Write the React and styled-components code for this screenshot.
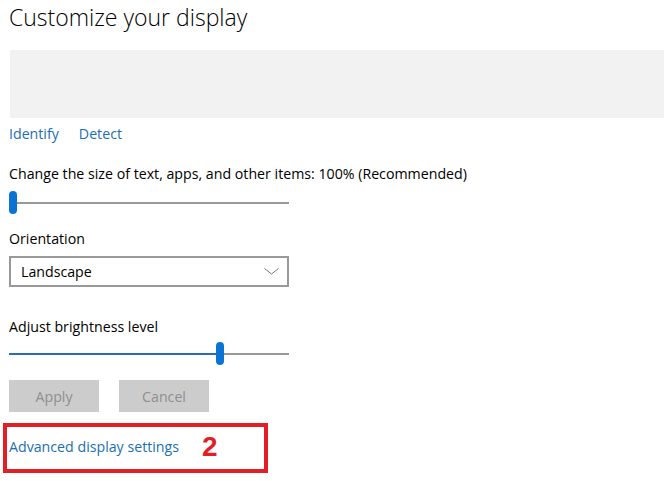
import React from "react";
import styled, { createGlobalStyle } from "styled-components";

const Global = createGlobalStyle`
  html, body { margin: 0; padding: 0; background: #fff; }
  body { font-family: "Open Sans", "Noto Sans", sans-serif; color: #000; }
`;

const Page = styled.div`
  width: 665px;
  height: 481px;
  overflow: hidden;
  box-sizing: border-box;
  padding: 0 1px 0 9px;
  display: flex;
  flex-direction: column;
`;

const Title = styled.h1`
  margin: 1px 0 0 0;
  font-weight: 300;
  font-size: 23px;
  line-height: 32px;
  color: #000;
`;

const Preview = styled.div`
  margin: 17px 0 0 1px;
  height: 68px;
  background: #f2f2f2;
`;

const LinkRow = styled.div`
  display: flex;
  gap: 20px;
  margin-top: 6px;
`;

const Link = styled.a`
  font-size: 14.2px;
  line-height: 20px;
  color: #1a6fb5;
  text-decoration: none;
  cursor: pointer;
`;

const Label = styled.div`
  font-size: 14.2px;
  line-height: 20px;
  margin-top: ${(p) => p.$top}px;
  color: #000;
`;

const SliderWrap = styled.div`
  position: relative;
  width: 280px;
  height: 24px;
  margin-top: ${(p) => p.$top}px;
  display: flex;
  align-items: center;
`;

const Track = styled.div`
  height: 2px;
  width: 100%;
  background: linear-gradient(
    to right,
    #2a6db5 0,
    #2a6db5 ${(p) => p.$fill}%,
    #999 ${(p) => p.$fill}%,
    #999 100%
  );
`;

const Thumb = styled.div`
  position: absolute;
  top: 0;
  width: 8px;
  height: 23px;
  border-radius: 4px;
  background: #0a74d2;
`;

const Select = styled.div`
  box-sizing: border-box;
  width: 280px;
  height: 31px;
  margin-top: ${(p) => p.$top}px;
  border: 2px solid #999;
  display: flex;
  align-items: center;
  justify-content: space-between;
  padding: 0 8px 0 10px;
  font-size: 14.2px;
`;

const ButtonRow = styled.div`
  display: flex;
  gap: 20px;
  margin-top: 14px;
`;

const Button = styled.button`
  width: 90px;
  height: 32px;
  border: none;
  background: #cccccc;
  color: #8f8f8f;
  font-family: inherit;
  font-size: 14.2px;
  padding: 0;
`;

const Highlight = styled.div`
  box-sizing: border-box;
  width: 265px;
  height: 50px;
  margin: 11px 0 0 -6px;
  border: 4px solid #e31e27;
  display: flex;
  align-items: center;
  padding: 0 0 2px 2px;
`;

const Badge = styled.span`
  margin-left: 23px;
  font-family: "Liberation Sans", Arial, sans-serif;
  font-weight: 700;
  font-size: 28px;
  line-height: 30px;
  color: #e31e27;
`;

function Slider({ value, top }) {
  return (
    <SliderWrap $top={top}>
      <Track $fill={value} />
      <Thumb style={{ left: `calc((100% - 8px) * ${value / 100})` }} />
    </SliderWrap>
  );
}

export default function App() {
  return (
    <>
      <Global />
      <Page>
        <Title>Customize your display</Title>
        <Preview />
        <LinkRow>
          <Link>Identify</Link>
          <Link>Detect</Link>
        </LinkRow>
        <Label $top={20}>
          Change the size of text, apps, and other items: 100% (Recommended)
        </Label>
        <Slider value={0} top={7} />
        <Label $top={14}>Orientation</Label>
        <Select $top={7}>
          <span>Landscape</span>
          <svg width="15" height="7" viewBox="0 0 15 7">
            <path d="M0.5 0.5 L7.5 6 L14.5 0.5" fill="none" stroke="#777" strokeWidth="1" />
          </svg>
        </Select>
        <Label $top={30}>Adjust brightness level</Label>
        <Slider value={76.2} top={5} />
        <ButtonRow>
          <Button>Apply</Button>
          <Button>Cancel</Button>
        </ButtonRow>
        <Highlight>
          <Link>Advanced display settings</Link>
          <Badge>2</Badge>
        </Highlight>
      </Page>
    </>
  );
}
